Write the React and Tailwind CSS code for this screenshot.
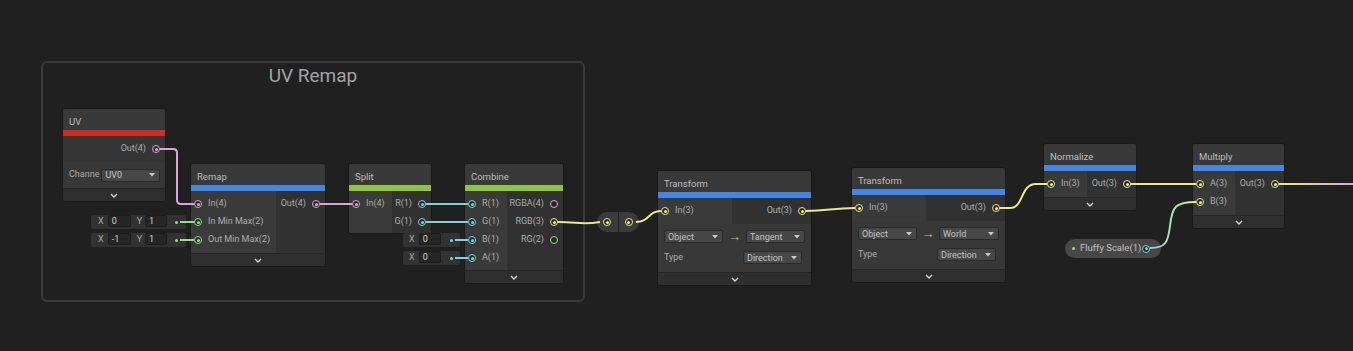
const PORT = {
  v4: { ring: 'border-[#d8a8d4]', dot: 'bg-[#d8a8d4]' },
  v3: { ring: 'border-[#e6ea8c]', dot: 'bg-[#e6ea8c]' },
  v2: { ring: 'border-[#90e088]', dot: 'bg-[#90e088]' },
  v1: { ring: 'border-[#7fd4d8]', dot: 'bg-[#7fd4d8]' },
}

function Port({ t, on = true }) {
  const p = PORT[t]
  return (
    <span className={`w-[8px] h-[8px] rounded-full border-[1.5px] ${p.ring} bg-[#262626] flex items-center justify-center shrink-0`}>
      {on && <span className={`w-[3px] h-[3px] rounded-full ${p.dot}`} />}
    </span>
  )
}

function InRow({ label, t, on }) {
  return (
    <div className="h-[18px] flex items-center pl-[3px] gap-[6px] text-[9px] text-[#acacac] whitespace-nowrap">
      <Port t={t} on={on} />
      <span>{label}</span>
    </div>
  )
}

function OutRow({ label, t, on }) {
  return (
    <div className="h-[18px] flex items-center justify-end pr-[5px] gap-[6px] text-[9px] text-[#acacac] whitespace-nowrap">
      <span>{label}</span>
      <Port t={t} on={on} />
    </div>
  )
}

function Chevron() {
  return (
    <div className="h-[13px] bg-[#2f2f2f] border-t border-[#262626] flex items-center justify-center">
      <svg width="8" height="5" viewBox="0 0 8 5">
        <path d="M1 1 L4 4 L7 1" stroke="#d4d4d4" strokeWidth="1.4" fill="none" />
      </svg>
    </div>
  )
}

function Node({ pos, title, bar, children }) {
  return (
    <div className={`absolute ${pos} bg-[#2e2e2e] border border-[#1a1a1a] rounded-[3px] overflow-hidden`}>
      <div className="h-[21px] bg-[#393939] px-[6px] pt-[7px] text-[9.5px] leading-[12px] text-[#bdbdbd]">{title}</div>
      <div className={`h-[6px] ${bar}`} />
      {children}
    </div>
  )
}

function Ports({ h, lw, ins, outs }) {
  return (
    <div className={`flex ${h}`}>
      <div className={`${lw} bg-[#3a3a3a] pt-[4px]`}>{ins}</div>
      <div className="flex-1 bg-[#313131] pt-[4px]">{outs}</div>
    </div>
  )
}

function Drop({ w, label }) {
  return (
    <div className={`${w} h-[13px] bg-[#474747] border border-[#2a2a2a] rounded-[2px] flex items-center justify-between pl-[3px] pr-[4px] text-[9px] leading-[10px] text-[#c4c4c4]`}>
      <span>{label}</span>
      <svg width="6" height="4" viewBox="0 0 6 4">
        <path d="M0 0 H6 L3 3.5 Z" fill="#c8c8c8" />
      </svg>
    </div>
  )
}

function Field({ v, w }) {
  return (
    <span className={`${w} h-[12px] bg-[#262626] border border-[#1c1c1c] rounded-[2px] pl-[3px] text-[9px] leading-[10px] text-[#cfcfcf]`}>{v}</span>
  )
}

function Dot({ c }) {
  return <span className={`w-[3px] h-[3px] rounded-full ${c}`} />
}

function TransformControls({ to, toW }) {
  return (
    <div className="h-[48px] bg-[#383838] pt-[6px] px-[6px] flex flex-col gap-[8px]">
      <div className="flex items-center">
        <Drop w="w-[59px]" label="Object" />
        <span className="flex-1 text-center text-[13px] leading-[12px] text-[#bdbdbd]">→</span>
        <Drop w={toW} label={to} />
      </div>
      <div className="flex items-center justify-between pr-[3px]">
        <span className="text-[9px] text-[#acacac]">Type</span>
        <Drop w="w-[59px]" label="Direction" />
      </div>
    </div>
  )
}

export default function App() {
  return (
    <div className="relative w-[1353px] h-[351px] bg-[#202020] overflow-hidden font-['Roboto',sans-serif]">
      {/* group */}
      <div className="absolute left-[41px] top-[61px] w-[544px] h-[241px] border-2 border-[#3b3b3b] rounded-[6px]">
        <div className="pt-[2px] text-center text-[19px] leading-[22px] text-[#a3a3a3]">UV Remap</div>
      </div>

      {/* UV */}
      <Node pos="left-[62px] top-[108px] w-[104px]" title="UV" bar="bg-[#cf2d22]">
        <div className="h-[26px] bg-[#353535] pt-[4px]">
          <OutRow label="Out(4)" t="v4" />
        </div>
        <div className="h-[26px] bg-[#383838] flex items-center pl-[6px] gap-[2px] text-[9px] text-[#acacac]">
          <span>Channe</span>
          <Drop w="w-[59px]" label="UV0" />
        </div>
        <Chevron />
      </Node>

      {/* Remap */}
      <Node pos="left-[190px] top-[163px] w-[136px]" title="Remap" bar="bg-[#4287e6]">
        <Ports
          h="h-[62px]"
          lw="w-[85px]"
          ins={<>
            <InRow label="In(4)" t="v4" />
            <InRow label="In Min Max(2)" t="v2" />
            <InRow label="Out Min Max(2)" t="v2" />
          </>}
          outs={<OutRow label="Out(4)" t="v4" />}
        />
        <Chevron />
      </Node>

      {/* Remap inline values */}
      <div className="absolute left-[91px] top-[215px] w-[95px] h-[14px] bg-[#323232] rounded-[2px] flex items-center pl-[7px] text-[9px] text-[#a8a8a8]">
        <span>X</span>
        <span className="ml-[4px]"><Field v="0" w="inline-block w-[23px]" /></span>
        <span className="ml-[6px]">Y</span>
        <span className="ml-[3px]"><Field v="1" w="inline-block w-[22px]" /></span>
        <span className="ml-[8px] flex"><Dot c="bg-[#90e088]" /></span>
      </div>
      <div className="absolute left-[91px] top-[233px] w-[95px] h-[14px] bg-[#323232] rounded-[2px] flex items-center pl-[7px] text-[9px] text-[#a8a8a8]">
        <span>X</span>
        <span className="ml-[4px]"><Field v="-1" w="inline-block w-[23px]" /></span>
        <span className="ml-[6px]">Y</span>
        <span className="ml-[3px]"><Field v="1" w="inline-block w-[22px]" /></span>
        <span className="ml-[8px] flex"><Dot c="bg-[#90e088]" /></span>
      </div>

      {/* Split */}
      <Node pos="left-[348px] top-[163px] w-[84px]" title="Split" bar="bg-[#8cc63a]">
        <Ports
          h="h-[42px]"
          lw="w-[43px]"
          ins={<InRow label="In(4)" t="v4" />}
          outs={<>
            <OutRow label="R(1)" t="v1" />
            <OutRow label="G(1)" t="v1" />
          </>}
        />
      </Node>

      {/* Combine */}
      <Node pos="left-[464px] top-[163px] w-[100px]" title="Combine" bar="bg-[#8cc63a]">
        <Ports
          h="h-[79px]"
          lw="w-[42px]"
          ins={<>
            <InRow label="R(1)" t="v1" />
            <InRow label="G(1)" t="v1" />
            <InRow label="B(1)" t="v1" />
            <InRow label="A(1)" t="v1" />
          </>}
          outs={<>
            <OutRow label="RGBA(4)" t="v4" on={false} />
            <OutRow label="RGB(3)" t="v3" />
            <OutRow label="RG(2)" t="v2" on={false} />
          </>}
        />
        <Chevron />
      </Node>

      {/* Combine inline values */}
      <div className="absolute left-[403px] top-[233px] w-[57px] h-[14px] bg-[#323232] rounded-[2px] flex items-center pl-[6px] text-[9px] text-[#a8a8a8]">
        <span>X</span>
        <span className="ml-[4px]"><Field v="0" w="inline-block w-[22px]" /></span>
        <span className="ml-[9px] flex"><Dot c="bg-[#7fd4d8]" /></span>
      </div>
      <div className="absolute left-[403px] top-[251px] w-[57px] h-[14px] bg-[#323232] rounded-[2px] flex items-center pl-[6px] text-[9px] text-[#a8a8a8]">
        <span>X</span>
        <span className="ml-[4px]"><Field v="0" w="inline-block w-[22px]" /></span>
        <span className="ml-[9px] flex"><Dot c="bg-[#7fd4d8]" /></span>
      </div>

      {/* redirect */}
      <div className="absolute left-[597px] top-[212px] w-[42px] h-[20px] bg-[#3b3b3b] rounded-full flex overflow-hidden">
        <div className="flex-1 flex items-center justify-center border-r border-[#262626]"><Port t="v3" /></div>
        <div className="flex-1 flex items-center justify-center"><Port t="v3" /></div>
      </div>

      {/* Transform 1 */}
      <Node pos="left-[657px] top-[170px] w-[155px]" title="Transform" bar="bg-[#4287e6]">
        <Ports
          h="h-[26px]"
          lw="w-[74px]"
          ins={<InRow label="In(3)" t="v3" />}
          outs={<OutRow label="Out(3)" t="v3" />}
        />
        <TransformControls to="Tangent" toW="w-[59px]" />
        <Chevron />
      </Node>

      {/* Transform 2 */}
      <Node pos="left-[851px] top-[167px] w-[155px]" title="Transform" bar="bg-[#4287e6]">
        <Ports
          h="h-[26px]"
          lw="w-[74px]"
          ins={<InRow label="In(3)" t="v3" />}
          outs={<OutRow label="Out(3)" t="v3" />}
        />
        <TransformControls to="World" toW="w-[60px]" />
        <Chevron />
      </Node>

      {/* Normalize */}
      <Node pos="left-[1043px] top-[143px] w-[94px]" title="Normalize" bar="bg-[#4287e6]">
        <Ports
          h="h-[26px]"
          lw="w-[43px]"
          ins={<InRow label="In(3)" t="v3" />}
          outs={<OutRow label="Out(3)" t="v3" />}
        />
        <Chevron />
      </Node>

      {/* Multiply */}
      <Node pos="left-[1192px] top-[143px] w-[93px]" title="Multiply" bar="bg-[#4287e6]">
        <Ports
          h="h-[44px]"
          lw="w-[42px]"
          ins={<>
            <InRow label="A(3)" t="v3" />
            <InRow label="B(3)" t="v3" />
          </>}
          outs={<OutRow label="Out(3)" t="v3" />}
        />
        <Chevron />
      </Node>

      {/* property */}
      <div className="absolute left-[1065px] top-[239px] w-[96px] h-[19px] bg-[#474747] rounded-full flex items-center pl-[7px] pr-[11px] text-[9.5px] text-[#c0c0c0]">
        <Dot c="bg-[#90e088]" />
        <span className="ml-[5px] flex-1">Fluffy Scale(1)</span>
        <Port t="v1" />
      </div>

      {/* edges */}
      <svg className="absolute inset-0 pointer-events-none" width="1353" height="351" viewBox="0 0 1353 351">
        <defs>
          <linearGradient id="gB" x1="1150" y1="0" x2="1196" y2="0" gradientUnits="userSpaceOnUse">
            <stop offset="0" stopColor="#7fd4d8" />
            <stop offset="1" stopColor="#e6ea8c" />
          </linearGradient>
          <linearGradient id="gO" x1="1279" y1="0" x2="1353" y2="0" gradientUnits="userSpaceOnUse">
            <stop offset="0" stopColor="#e6ea8c" />
            <stop offset="1" stopColor="#d8a8d4" />
          </linearGradient>
        </defs>
        <g fill="none" strokeWidth="2">
          <path d="M160 149 H173 Q177 149 177 153 V200 Q177 204 181 204 H194" stroke="#d8a8d4" />
          <path d="M320 204 H352" stroke="#d8a8d4" />
          <path d="M426 204 H468 M426 222 H468" stroke="#7fd4d8" />
          <path d="M180 222 H194 M180 240 H194" stroke="#90e088" />
          <path d="M455 240 H468 M455 258 H468" stroke="#7fd4d8" />
          <path d="M558 222 C578 222 582 225 600 222" stroke="#e6ea8c" />
          <path d="M636 222 C650 222 648 211 661 211" stroke="#e6ea8c" />
          <path d="M806 211 C828 211 832 208 855 208" stroke="#e6ea8c" />
          <path d="M1000 208 H1010 C1024 208 1020 184 1036 184 H1047" stroke="#e6ea8c" />
          <path d="M1131 184 H1196" stroke="#e6ea8c" />
          <path d="M1150 248 C1166 248 1168 242 1170 226 C1172 206 1176 202 1196 202" stroke="url(#gB)" />
          <path d="M1279 184 H1353" stroke="url(#gO)" />
        </g>
      </svg>
    </div>
  )
}
